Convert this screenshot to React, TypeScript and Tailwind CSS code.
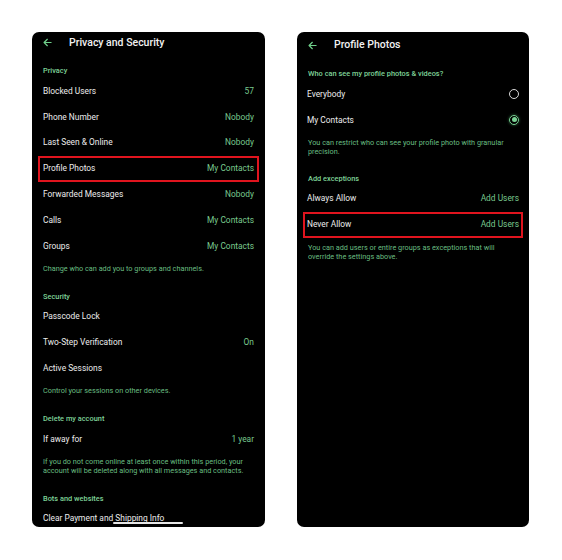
import React from "react";

const Arrow = () => (
  <svg width="9" height="9" viewBox="0 0 10 10" fill="none" stroke="#6fcf8a" strokeWidth="1.3" strokeLinecap="round" strokeLinejoin="round">
    <path d="M9 5H1.2M4.8 1.4L1.2 5l3.6 3.6" />
  </svg>
);

const Header = ({ title, h, gap }: { title: string; h: string; gap: string }) => (
  <div className={`flex items-center ${h} pl-[11px]`}>
    <Arrow />
    <span className={`${gap} text-[10.5px] font-medium text-[#f2f2f2]`} style={{ fontFamily: "Roboto, sans-serif" }}>
      {title}
    </span>
  </div>
);

const Section = ({ text, cls = "" }: { text: string; cls?: string }) => (
  <div className={`h-[14px] flex items-center px-[5px] text-[7.4px] font-medium text-[#7fd398] ${cls}`}>{text}</div>
);

const Row = ({ label, value, hl = false, pad = "px-[3px]", right }: { label: string; value?: string; hl?: boolean; pad?: string; right?: React.ReactNode }) => (
  <div className={`h-[25.9px] flex items-center justify-between border-2 ${hl ? "border-[#e0141e]" : "border-transparent"} ${pad}`}>
    <span className="text-[8.4px] text-[#ececec]">{label}</span>
    {value && <span className="text-[8.4px] text-[#78c98e]">{value}</span>}
    {right}
  </div>
);

const Caption = ({ children, cls = "" }: { children: React.ReactNode; cls?: string }) => (
  <div className={`px-[5px] text-[7.3px] leading-[9px] text-[#68bd80] ${cls}`}>{children}</div>
);

const Radio = ({ on }: { on?: boolean }) =>
  on ? (
    <span className="w-[10px] h-[10px] rounded-full border-[1.3px] border-[#7ad394] flex items-center justify-center shadow-[0_0_3px_#2f6a40]">
      <span className="w-[5px] h-[5px] rounded-full bg-[#7ad394]" />
    </span>
  ) : (
    <span className="w-[10px] h-[10px] rounded-full border-[1.3px] border-[#d8d8d8]" />
  );

export default function App() {
  return (
    <div className="w-[562px] h-[560px] bg-white flex gap-[32px] pl-[32px] pt-[32px]" style={{ fontFamily: "Roboto, 'Open Sans', sans-serif" }}>
      <div className="relative w-[233px] h-[495px] bg-black rounded-[7px] overflow-hidden">
        <Header title="Privacy and Security" h="h-[21px]" gap="ml-[17px]" />
        <div className="px-[6px]">
          <Section text="Privacy" cls="mt-[11px]" />
          <Row label="Blocked Users" value="57" />
          <Row label="Phone Number" value="Nobody" />
          <Row label="Last Seen & Online" value="Nobody" />
          <Row label="Profile Photos" value="My Contacts" hl />
          <Row label="Forwarded Messages" value="Nobody" />
          <Row label="Calls" value="My Contacts" />
          <Row label="Groups" value="My Contacts" />
          <Caption cls="pt-[5px]">Change who can add you to groups and channels.</Caption>
          <Section text="Security" cls="mt-[16px]" />
          <Row label="Passcode Lock" />
          <Row label="Two-Step Verification" value="On" />
          <Row label="Active Sessions" />
          <Caption cls="pt-[5px]">Control your sessions on other devices.</Caption>
          <Section text="Delete my account" cls="mt-[17px]" />
          <Row label="If away for" value="1 year" />
          <Caption cls="pt-[5px]">
            If you do not come online at least once within this period, your
            <br />
            account will be deleted along with all messages and contacts.
          </Caption>
          <Section text="Bots and websites" cls="mt-[17px]" />
          <Row label="Clear Payment and Shipping Info" />
        </div>
        <div className="absolute left-[81px] top-[490px] w-[70px] h-[1.5px] bg-[#e6e6e6] rounded-full" />
      </div>

      <div className="w-[232px] h-[495px] bg-black rounded-[7px] overflow-hidden">
        <Header title="Profile Photos" h="h-[26px]" gap="ml-[17px]" />
        <div className="px-[6px]">
          <Section text="Who can see my profile photos & videos?" cls="mt-[9px] px-[4px]" />
          <Row label="Everybody" pad="px-[2px]" right={<Radio />} />
          <Row label="My Contacts" pad="px-[2px]" right={<Radio on />} />
          <Caption cls="pt-[5px] px-[4px]">
            You can restrict who can see your profile photo with granular
            <br />
            precision.
          </Caption>
          <Section text="Add exceptions" cls="mt-[16px] px-[4px]" />
          <Row label="Always Allow" value="Add Users" pad="px-[2px]" />
          <Row label="Never Allow" value="Add Users" pad="px-[2px]" hl />
          <Caption cls="pt-[5px] px-[4px]">
            You can add users or entire groups as exceptions that will
            <br />
            override the settings above.
          </Caption>
        </div>
      </div>
    </div>
  );
}
